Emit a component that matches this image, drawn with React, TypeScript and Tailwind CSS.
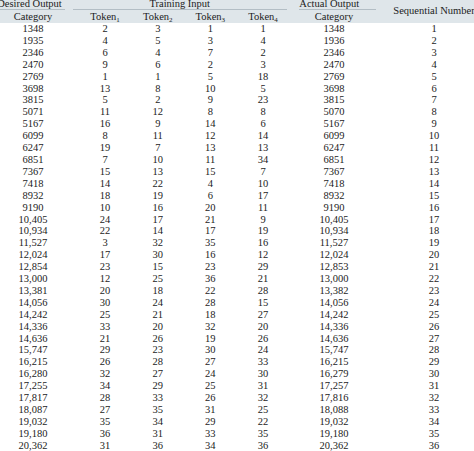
const rows: string[][] = [
  ['1348', '2', '3', '1', '1', '1348', '1'],
  ['1935', '4', '5', '3', '4', '1936', '2'],
  ['2346', '6', '4', '7', '2', '2346', '3'],
  ['2470', '9', '6', '2', '3', '2470', '4'],
  ['2769', '1', '1', '5', '18', '2769', '5'],
  ['3698', '13', '8', '10', '5', '3698', '6'],
  ['3815', '5', '2', '9', '23', '3815', '7'],
  ['5071', '11', '12', '8', '8', '5070', '8'],
  ['5167', '16', '9', '14', '6', '5167', '9'],
  ['6099', '8', '11', '12', '14', '6099', '10'],
  ['6247', '19', '7', '13', '13', '6247', '11'],
  ['6851', '7', '10', '11', '34', '6851', '12'],
  ['7367', '15', '13', '15', '7', '7367', '13'],
  ['7418', '14', '22', '4', '10', '7418', '14'],
  ['8932', '18', '19', '6', '17', '8932', '15'],
  ['9190', '10', '16', '20', '11', '9190', '16'],
  ['10,405', '24', '17', '21', '9', '10,405', '17'],
  ['10,934', '22', '14', '17', '19', '10,934', '18'],
  ['11,527', '3', '32', '35', '16', '11,527', '19'],
  ['12,024', '17', '30', '16', '12', '12,024', '20'],
  ['12,854', '23', '15', '23', '29', '12,853', '21'],
  ['13,000', '12', '25', '36', '21', '13,000', '22'],
  ['13,381', '20', '18', '22', '28', '13,382', '23'],
  ['14,056', '30', '24', '28', '15', '14,056', '24'],
  ['14,242', '25', '21', '18', '27', '14,242', '25'],
  ['14,336', '33', '20', '32', '20', '14,336', '26'],
  ['14,636', '21', '26', '19', '26', '14,636', '27'],
  ['15,747', '29', '23', '30', '24', '15,747', '28'],
  ['16,215', '26', '28', '27', '33', '16,215', '29'],
  ['16,280', '32', '27', '24', '30', '16,279', '30'],
  ['17,255', '34', '29', '25', '31', '17,257', '31'],
  ['17,817', '28', '33', '26', '32', '17,816', '32'],
  ['18,087', '27', '35', '31', '25', '18,088', '33'],
  ['19,032', '35', '34', '29', '22', '19,032', '34'],
  ['19,180', '36', '31', '33', '35', '19,180', '35'],
  ['20,362', '31', '36', '34', '36', '20,362', '36'],
];

// per-column padding so the text sits on the same centres as the scan
const cellPad = ['pr-[3px]', 'pl-[9.5px]', '', '', 'pr-[9px]', 'pr-[14.5px]', ''];

const grid = 'grid grid-cols-[69px_62.5px_52.5px_52.5px_62px_85.5px_100px]';

function Token({ n }: { n: string }) {
  return (
    <span>
      Token<sub className="text-[7px] leading-none align-baseline relative top-[2px]">{n}</sub>
    </span>
  );
}

export default function App() {
  return (
    <div className="w-[474px] h-[451px] overflow-hidden bg-white text-[#1c1c1c] text-[10.5px] font-['Liberation_Serif',serif]">
      <div className="w-[484px]">
        {/* header */}
        <div className={`${grid} bg-[#dfe6ea] grid-rows-[10px_13px] whitespace-nowrap`}>
          <div className="col-start-1 row-start-1 flex justify-center pr-[6px] leading-[8px] border-b border-[#b3bec5] mr-[4px]">
            Desired Output
          </div>
          <div className="col-start-2 col-span-4 row-start-1 flex justify-center leading-[8px] border-b border-[#b3bec5] ml-[4px] mr-[12px]">
            Training Input
          </div>
          <div className="col-start-6 row-start-1 flex justify-center pr-[16px] leading-[8px] border-b border-[#b3bec5] mr-[8px]">
            Actual Output
          </div>
          <div className="col-start-7 row-start-1 row-span-2 flex items-center justify-center pb-[2px]">
            Sequential Number
          </div>
          <div className={`col-start-1 row-start-2 text-center leading-[13px] ${cellPad[0]}`}>Category</div>
          <div className={`col-start-2 row-start-2 text-center leading-[13px] ${cellPad[1]}`}>
            <Token n="1" />
          </div>
          <div className={`col-start-3 row-start-2 text-center leading-[13px] ${cellPad[2]}`}>
            <Token n="2" />
          </div>
          <div className={`col-start-4 row-start-2 text-center leading-[13px] ${cellPad[3]}`}>
            <Token n="3" />
          </div>
          <div className={`col-start-5 row-start-2 text-center leading-[13px] ${cellPad[4]}`}>
            <Token n="4" />
          </div>
          <div className={`col-start-6 row-start-2 text-center leading-[13px] ${cellPad[5]}`}>Category</div>
        </div>

        {/* body */}
        {rows.map((r, i) => (
          <div key={i} className={`${grid} h-[11.92px]`}>
            {r.map((v, j) => (
              <div key={j} className={`text-center leading-[11.92px] ${cellPad[j]}`}>
                {v}
              </div>
            ))}
          </div>
        ))}
      </div>
    </div>
  );
}
